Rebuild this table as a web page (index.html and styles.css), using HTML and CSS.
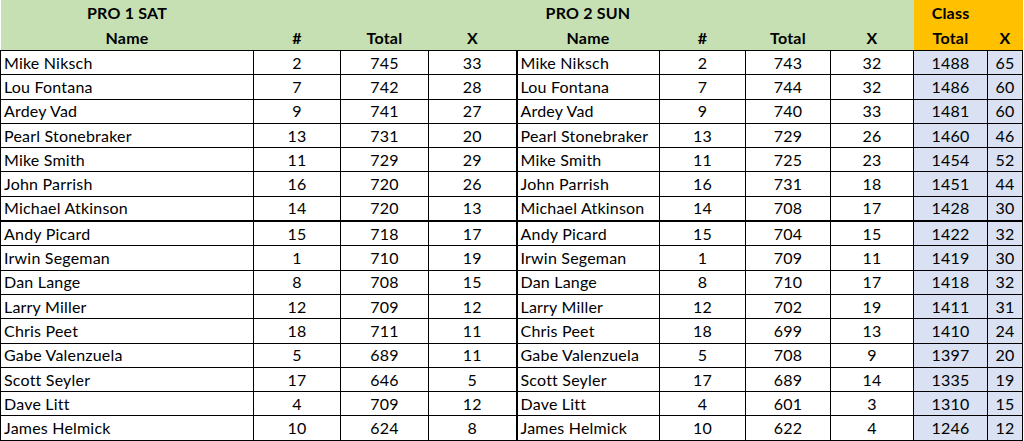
FILE: index.html
```html
<!DOCTYPE html>
<html>
<head>
<meta charset="utf-8">
<link rel="stylesheet" href="styles.css">
</head>
<body>
<table class="sheet">
<colgroup>
<col class="c-name1"><col class="c-num1"><col class="c-tot1"><col class="c-x1">
<col class="c-name2"><col class="c-num2"><col class="c-tot2"><col class="c-x2">
<col class="c-ctot"><col class="c-cx">
</colgroup>
<thead>
<tr class="h1">
<th class="g">PRO 1 SAT</th><th class="g"></th><th class="g"></th><th class="g"></th>
<th class="g">PRO 2 SUN</th><th class="g"></th><th class="g"></th><th class="g"></th>
<th class="o">Class</th><th class="o"></th>
</tr>
<tr class="h2">
<th class="g">Name</th><th class="g">#</th><th class="g">Total</th><th class="g">X</th>
<th class="g">Name</th><th class="g">#</th><th class="g">Total</th><th class="g">X</th>
<th class="o">Total</th><th class="o">X</th>
</tr>
</thead>
<tbody>
<tr><td class="n">Mike Niksch</td><td>2</td><td>745</td><td>33</td><td class="n sep">Mike Niksch</td><td>2</td><td>743</td><td>32</td><td class="b">1488</td><td class="b">65</td></tr>
<tr><td class="n">Lou Fontana</td><td>7</td><td>742</td><td>28</td><td class="n sep">Lou Fontana</td><td>7</td><td>744</td><td>32</td><td class="b">1486</td><td class="b">60</td></tr>
<tr><td class="n">Ardey Vad</td><td>9</td><td>741</td><td>27</td><td class="n sep">Ardey Vad</td><td>9</td><td>740</td><td>33</td><td class="b">1481</td><td class="b">60</td></tr>
<tr><td class="n">Pearl Stonebraker</td><td>13</td><td>731</td><td>20</td><td class="n sep">Pearl Stonebraker</td><td>13</td><td>729</td><td>26</td><td class="b">1460</td><td class="b">46</td></tr>
<tr><td class="n">Mike Smith</td><td>11</td><td>729</td><td>29</td><td class="n sep">Mike Smith</td><td>11</td><td>725</td><td>23</td><td class="b">1454</td><td class="b">52</td></tr>
<tr><td class="n">John Parrish</td><td>16</td><td>720</td><td>26</td><td class="n sep">John Parrish</td><td>16</td><td>731</td><td>18</td><td class="b">1451</td><td class="b">44</td></tr>
<tr class="cut"><td class="n">Michael Atkinson</td><td>14</td><td>720</td><td>13</td><td class="n sep">Michael Atkinson</td><td>14</td><td>708</td><td>17</td><td class="b">1428</td><td class="b">30</td></tr>
<tr><td class="n">Andy Picard</td><td>15</td><td>718</td><td>17</td><td class="n sep">Andy Picard</td><td>15</td><td>704</td><td>15</td><td class="b">1422</td><td class="b">32</td></tr>
<tr><td class="n">Irwin Segeman</td><td>1</td><td>710</td><td>19</td><td class="n sep">Irwin Segeman</td><td>1</td><td>709</td><td>11</td><td class="b">1419</td><td class="b">30</td></tr>
<tr><td class="n">Dan Lange</td><td>8</td><td>708</td><td>15</td><td class="n sep">Dan Lange</td><td>8</td><td>710</td><td>17</td><td class="b">1418</td><td class="b">32</td></tr>
<tr><td class="n">Larry Miller</td><td>12</td><td>709</td><td>12</td><td class="n sep">Larry Miller</td><td>12</td><td>702</td><td>19</td><td class="b">1411</td><td class="b">31</td></tr>
<tr><td class="n">Chris Peet</td><td>18</td><td>711</td><td>11</td><td class="n sep">Chris Peet</td><td>18</td><td>699</td><td>13</td><td class="b">1410</td><td class="b">24</td></tr>
<tr><td class="n">Gabe Valenzuela</td><td>5</td><td>689</td><td>11</td><td class="n sep">Gabe Valenzuela</td><td>5</td><td>708</td><td>9</td><td class="b">1397</td><td class="b">20</td></tr>
<tr><td class="n">Scott Seyler</td><td>17</td><td>646</td><td>5</td><td class="n sep">Scott Seyler</td><td>17</td><td>689</td><td>14</td><td class="b">1335</td><td class="b">19</td></tr>
<tr><td class="n">Dave Litt</td><td>4</td><td>709</td><td>12</td><td class="n sep">Dave Litt</td><td>4</td><td>601</td><td>3</td><td class="b">1310</td><td class="b">15</td></tr>
<tr><td class="n">James Helmick</td><td>10</td><td>624</td><td>8</td><td class="n sep">James Helmick</td><td>10</td><td>622</td><td>4</td><td class="b">1246</td><td class="b">12</td></tr>
</tbody>
</table>
</body>
</html>
```
FILE: styles.css
```css
html, body {
  margin: 0;
  padding: 0;
  background: #ffffff;
}
body {
  font-family: Lato, "Open Sans", "Liberation Sans", sans-serif;
  font-size: 16px;
  letter-spacing: 0.2px;
  color: #000000;
}
.sheet {
  border-collapse: collapse;
  table-layout: fixed;
  width: 1022px;
}
.c-name1 { width: 253px; }
.c-num1 { width: 87px; }
.c-tot1 { width: 88px; }
.c-x1 { width: 88px; }
.c-name2 { width: 143px; }
.c-num2 { width: 86px; }
.c-tot2 { width: 85px; }
.c-x2 { width: 83px; }
.c-ctot { width: 74px; }
.c-cx { width: 35px; }

.sheet th {
  height: 25px;
  padding: 0;
  font-weight: bold;
  text-align: center;
  vertical-align: middle;
  border: none;
  line-height: 25px;
}
.g { background: #c6e0b4; }
.o { background: #ffc000; }

.sheet td {
  height: 23.3px;
  padding: 0 3px;
  border: 1px solid #000000;
  text-align: center;
  vertical-align: middle;
  white-space: nowrap;
  overflow: hidden;
  line-height: 20px;
}
.sheet td.n { text-align: left; }
.sheet td.sep { border-left: 2px solid #000000; }
.sheet td.b { background: #d9e1f2; }
.sheet tr.cut td { border-bottom: 2px solid #000000; }
.sheet tbody tr:last-child td { border-bottom: 2px solid #000000; }
```
